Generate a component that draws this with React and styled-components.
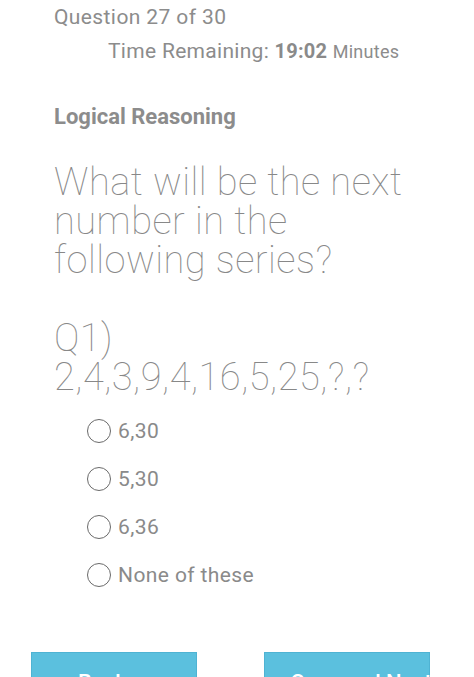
import styled, { createGlobalStyle } from "styled-components";

const GlobalStyle = createGlobalStyle`
  html, body {
    margin: 0;
    padding: 0;
    background: #fff;
  }
  body {
    font-family: Roboto, "Noto Sans", "Liberation Sans", sans-serif;
    color: #8a8a8a;
  }
`;

const Page = styled.div`
  width: 474px;
  height: 677px;
  overflow: hidden;
  box-sizing: border-box;
  padding: 4px 0 0 54px;
`;

const Counter = styled.div`
  font-size: 21px;
  line-height: 26px;
  letter-spacing: 0.4px;
  color: #8c8c8c;
`;

const Timer = styled.div`
  margin: 8px 0 0 54px;
  font-size: 21px;
  line-height: 26px;
  letter-spacing: 0.3px;
  color: #8c8c8c;

  b {
    font-weight: 700;
    font-size: 20px;
    letter-spacing: 0.2px;
    color: #8a8a8a;
  }

  small {
    font-size: 18px;
  }
`;

const Section = styled.h2`
  margin: 39px 0 0;
  font-size: 22px;
  line-height: 26px;
  font-weight: 700;
  color: #8c8c8c;
`;

const QuestionText = styled.p`
  margin: 33px 0 0;
  font-size: 38px;
  line-height: 39px;
  font-weight: 100;
  color: #888;
  letter-spacing: 0.5px;
  width: 365px;
`;

const Options = styled.div`
  margin: 21px 0 0 33px;
  display: flex;
  flex-direction: column;
  gap: 22px;
`;

const Option = styled.label`
  display: flex;
  align-items: center;
  gap: 7px;
  height: 26px;
  font-size: 21px;
  color: #8a8a8a;
  letter-spacing: 0.4px;
  cursor: pointer;
`;

const Radio = styled.span`
  display: inline-block;
  flex: none;
  width: 24px;
  height: 24px;
  border: 1.5px solid #6a6a6a;
  border-radius: 50%;
  box-sizing: border-box;
`;

const Buttons = styled.div`
  margin: 64px 0 0 -23px;
  display: flex;
  gap: 67px;
`;

const Button = styled.button`
  flex: none;
  width: 166px;
  height: 46px;
  background: #5bc0de;
  border: 1px solid #4fb3d3;
  color: #fff;
  font-family: Roboto, "Liberation Sans", sans-serif;
  font-size: 22px;
  font-weight: 500;
  line-height: 26px;
  padding: 16px 0 0 ${(p) => p.$indent}px;
  text-align: left;
  white-space: nowrap;
  overflow: visible;
`;

const options = ["6,30", "5,30", "6,36", "None of these"];

export default function App() {
  return (
    <>
      <GlobalStyle />
      <Page>
        <Counter>Question 27 of 30</Counter>
        <Timer>
          Time Remaining: <b>19:02</b> <small>Minutes</small>
        </Timer>
        <Section>Logical Reasoning</Section>
        <QuestionText>
          What will be the next number in the following series?
          <br />
          <br />
          Q1) 2,4,3,9,4,16,5,25,?,?
        </QuestionText>
        <Options>
          {options.map((o) => (
            <Option key={o}>
              <Radio />
              {o}
            </Option>
          ))}
        </Options>
        <Buttons>
          <Button $indent={46}>Back</Button>
          <Button $indent={26}>Save and Next</Button>
        </Buttons>
      </Page>
    </>
  );
}
